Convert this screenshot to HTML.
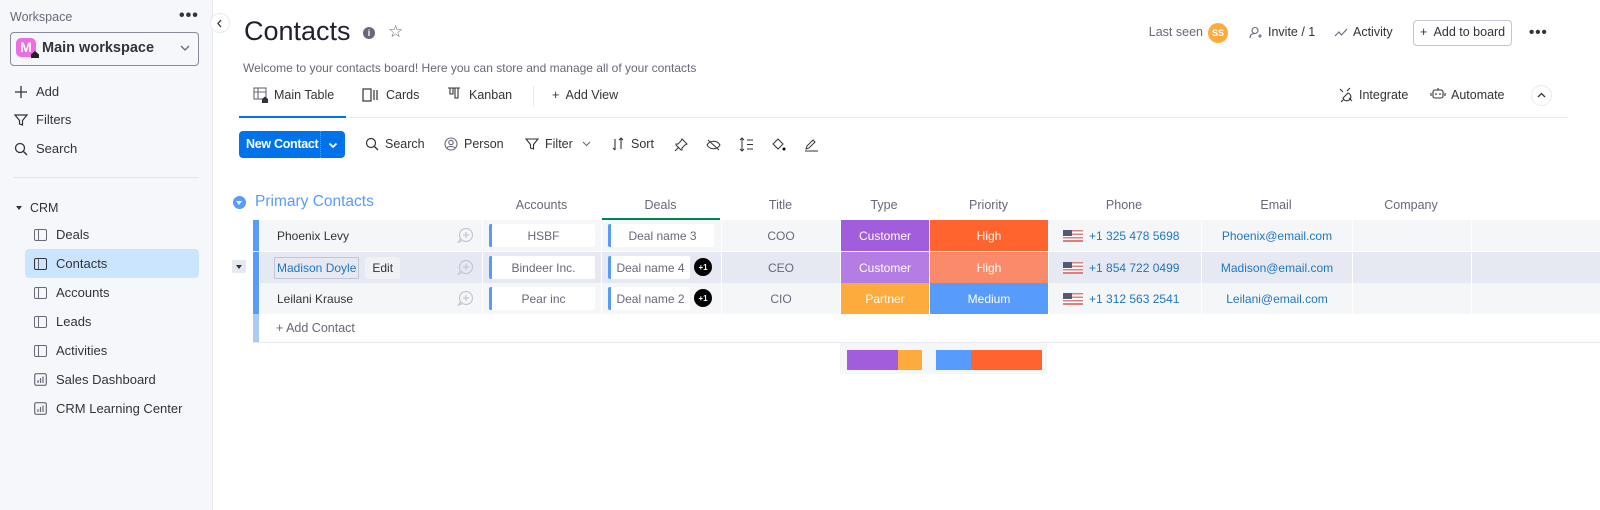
<!DOCTYPE html>
<html><head><meta charset="utf-8"><style>
*{box-sizing:border-box;margin:0;padding:0}
body{width:1600px;height:510px;overflow:hidden;background:#fff;font-family:"Liberation Sans",Arial,sans-serif;color:#323338;position:relative;font-size:13px}
.a{position:absolute}
.sb{left:0;top:0;width:213px;height:510px;background:#f6f7fb;border-right:1px solid #e6e9ef}
.ni{position:absolute;left:14px;font-size:13px;color:#323338;display:flex;align-items:center;gap:8px}
.tree{position:absolute;left:25px;width:174px;height:29px;display:flex;align-items:center;padding-left:9px;gap:9px;font-size:13px;color:#323338;border-radius:4px}
.ic{width:13px;height:12px;border:1.3px solid #676879;border-radius:2px;position:relative}
.ic:after{content:"";position:absolute;left:3px;top:0;bottom:0;border-left:1.3px solid #676879}
.row{position:absolute;left:253px;height:31px;display:flex;gap:1px}
.row>div{height:31px;background:#f5f6f8;display:flex;align-items:center;justify-content:center;font-size:12px;color:#676879;position:relative}
.row.sel>div{background:#e6e9f2}
.row>.bar{width:6px;background:#579bfc!important}
.box{position:absolute;top:4px;height:23px;background:#fff;border-left:3px solid #579bfc;border-radius:2px;display:flex;align-items:center;justify-content:center;font-size:12px;color:#676879}
.p1{position:absolute;width:18px;height:18px;border-radius:50%;background:#000;color:#fff;font-size:8px;font-weight:bold;display:flex;align-items:center;justify-content:center;top:6px}
.hd{position:absolute;top:198px;font-size:12.5px;color:#676879;text-align:center}
.flag{width:20px;height:12px;background:repeating-linear-gradient(#d98080 0 1.7px,#fff 1.7px 3.4px);position:relative;margin-right:6px}
.flag:before{content:"";position:absolute;left:0;top:0;width:9px;height:6px;background:#555a6e}
.row>div.blue{color:#1f76c2}
.tb{position:absolute;top:137px;font-size:12.5px;color:#323338;display:flex;align-items:center;gap:6px}
</style></head><body>
<div class="a sb"></div>
<div class="a" style="left:10px;top:10px;font-size:12.5px;color:#676879">Workspace</div>
<div class="a" style="left:179px;top:7px;font-size:16px;font-weight:bold;letter-spacing:1px">•••</div>
<div class="a" style="left:10px;top:32px;width:189px;height:34px;border:1px solid #888a99;border-radius:4px;background:#f6f7fb"></div>
<div class="a" style="left:16px;top:38px;width:20px;height:19px;background:#ed6ee0;border-radius:5px;color:#fff;font-weight:bold;font-size:14px;text-align:center;line-height:19px">M</div>
<div class="a" style="left:31px;top:51px;width:8px;height:7px;background:#222;clip-path:polygon(50% 0,100% 50%,100% 100%,0 100%,0 50%)"></div>
<div class="a" style="left:42px;top:40px;font-size:14.5px;font-weight:bold">Main workspace</div>
<svg class="a" style="left:180px;top:45px" width="10" height="7"><path d="M1 1l4 4 4-4" stroke="#676879" fill="none" stroke-width="1.3"/></svg>
<div class="a" style="left:210px;top:13px;width:20px;height:20px;border-radius:50%;background:#fff;border:1px solid #e6e9ef"></div>
<svg class="a" style="left:216px;top:19px" width="8" height="9"><path d="M5 1L2 4.5 5 8" stroke="#323338" fill="none" stroke-width="1.3"/></svg>
<div class="ni" style="top:84px"><svg width="14" height="14"><path d="M7 1v12M1 7h12" stroke="#323338" stroke-width="1.3"/></svg>Add</div>
<div class="ni" style="top:112px"><svg width="14" height="14"><path d="M1 2h12L8.5 7.5V12L5.5 11V7.5z" stroke="#323338" fill="none" stroke-width="1.2"/></svg>Filters</div>
<div class="ni" style="top:141px"><svg width="14" height="14"><circle cx="6" cy="6" r="4.5" stroke="#323338" fill="none" stroke-width="1.3"/><path d="M9.5 9.5L13 13" stroke="#323338" stroke-width="1.4"/></svg>Search</div>
<div class="a" style="left:13px;top:177px;width:186px;border-top:1px solid #e1e3ea"></div>
<div class="a" style="left:16px;top:206px;border-left:3.5px solid transparent;border-right:3.5px solid transparent;border-top:4px solid #323338"></div>
<div class="a" style="left:30px;top:201px;font-size:12.5px">CRM</div>
<div class="tree" style="top:220px"><div class="ic"></div>Deals</div>
<div class="tree" style="top:249px;background:#cce5ff"><div class="ic" style="border-color:#323338"></div>Contacts</div>
<div class="tree" style="top:278px"><div class="ic"></div>Accounts</div>
<div class="tree" style="top:307px"><div class="ic"></div>Leads</div>
<div class="tree" style="top:336px"><div class="ic"></div>Activities</div>
<div class="tree" style="top:365px"><svg width="13" height="13"><rect x=".7" y=".7" width="11.6" height="11.6" rx="1.5" stroke="#676879" fill="none" stroke-width="1.2"/><path d="M4 10V7M6.5 10V5M9 10V3.5" stroke="#676879" stroke-width="1.2"/></svg>Sales Dashboard</div>
<div class="tree" style="top:394px"><svg width="13" height="13"><rect x=".7" y=".7" width="11.6" height="11.6" rx="1.5" stroke="#676879" fill="none" stroke-width="1.2"/><path d="M4 10V7M6.5 10V5M9 10V3.5" stroke="#676879" stroke-width="1.2"/></svg>CRM Learning Center</div>

<div class="a" style="left:244px;top:16px;font-size:27px;color:#1f1f2e">Contacts</div>
<div class="a" style="left:363px;top:27px;width:12px;height:12px;border-radius:50%;background:#676879;color:#fff;font-size:9px;font-weight:bold;text-align:center;line-height:12px">i</div>
<div class="a" style="left:388px;top:22px;font-size:17px;color:#676879">☆</div>
<div class="a" style="left:243px;top:61px;font-size:12px;color:#676879">Welcome to your contacts board! Here you can store and manage all of your contacts</div>
<div class="a" style="left:1100px;width:103px;text-align:right;top:25px;font-size:12.5px;color:#676879">Last seen</div>
<div class="a" style="left:1208px;top:23px;width:20px;height:20px;border-radius:50%;background:#fdab3d;color:#fff;font-size:9px;font-weight:bold;text-align:center;line-height:20px">SS</div>
<svg class="a" style="left:1249px;top:26px" width="14" height="14"><circle cx="6" cy="4.5" r="3" stroke="#676879" fill="none" stroke-width="1.1"/><path d="M1 12c0-3 2-4.5 5-4.5M9 10h4M11 8v4" stroke="#676879" fill="none" stroke-width="1.1"/></svg>
<div class="a" style="left:1268px;top:25px;font-size:12.5px">Invite / 1</div>
<svg class="a" style="left:1334px;top:28px" width="14" height="9"><path d="M1 8l4-4 2.5 3L13 1" stroke="#676879" fill="none" stroke-width="1.1"/></svg>
<div class="a" style="left:1353px;top:25px;font-size:12.5px">Activity</div>
<div class="a" style="left:1413px;top:20px;width:99px;height:26px;border:1px solid #c3c6d4;border-radius:4px"></div>
<div class="a" style="left:1420px;top:25px;font-size:12.5px">+&nbsp; Add to board</div>
<div class="a" style="left:1529px;top:24px;font-size:15px;font-weight:bold;letter-spacing:1px">•••</div>

<svg class="a" style="left:253px;top:87px" width="16" height="16"><rect x="1" y="1" width="12" height="11" stroke="#676879" fill="none" stroke-width="1.1"/><path d="M1 5h12M5 1v11" stroke="#676879" stroke-width="1.1"/><path d="M9 16v-4l3-2.5 3 2.5v4z" fill="#323338"/></svg>
<div class="a" style="left:274px;top:88px;font-size:12.5px">Main Table</div>
<div class="a" style="left:239px;top:116px;width:107px;height:2px;background:#0073ea"></div>
<div class="a" style="left:346px;top:117px;width:1222px;height:1px;background:#e6e9ef"></div>
<svg class="a" style="left:362px;top:88px" width="16" height="14"><rect x="1" y="1" width="8" height="12" stroke="#323338" fill="none" stroke-width="1.2"/><path d="M12 2v10M15 2v10" stroke="#323338" stroke-width="1.2"/></svg>
<div class="a" style="left:386px;top:88px;font-size:12.5px">Cards</div>
<svg class="a" style="left:447px;top:87px" width="14" height="13"><path d="M1 1h12M3 1v6h3V1M8 1v10h3V1" stroke="#323338" fill="none" stroke-width="1.1"/></svg>
<div class="a" style="left:469px;top:88px;font-size:12.5px">Kanban</div>
<div class="a" style="left:533px;top:86px;width:1px;height:21px;background:#e6e9ef"></div>
<div class="a" style="left:552px;top:88px;font-size:12.5px">+&nbsp; Add View</div>
<svg class="a" style="left:1338px;top:87px" width="16" height="16"><path d="M2 2l3 3M12 1L9 4M10 6a4 4 0 1 1-5 5zM6 12l-3 3M11 11l3 3" stroke="#323338" fill="none" stroke-width="1.1"/></svg>
<div class="a" style="left:1359px;top:88px;font-size:12.5px">Integrate</div>
<svg class="a" style="left:1430px;top:87px" width="16" height="13"><rect x="3" y="3" width="10" height="8" rx="2" stroke="#323338" fill="none" stroke-width="1.1"/><path d="M8 1v2M1 6v3M15 6v3" stroke="#323338" stroke-width="1.1"/><circle cx="6" cy="7" r=".8"/><circle cx="10" cy="7" r=".8"/></svg>
<div class="a" style="left:1451px;top:88px;font-size:12.5px">Automate</div>
<div class="a" style="left:1531px;top:85px;width:21px;height:21px;border-radius:50%;border:1px solid #e6e9ef"></div>
<svg class="a" style="left:1537px;top:92px" width="9" height="6"><path d="M1 5l3.5-3.5L8 5" stroke="#323338" fill="none" stroke-width="1.3"/></svg>

<div class="a" style="left:239px;top:131px;width:106px;height:27px;background:#0073ea;border-radius:4px"></div>
<div class="a" style="left:320px;top:131px;width:1px;height:27px;border-left:1px dotted #5aa0f0"></div>
<div class="a" style="left:246px;top:137px;font-size:12.5px;color:#fff;font-weight:bold;letter-spacing:-.3px">New Contact</div>
<svg class="a" style="left:328px;top:142px" width="10" height="7"><path d="M1.5 1.5l3.5 3.5 3.5-3.5" stroke="#fff" fill="none" stroke-width="1.8"/></svg>
<div class="tb" style="left:365px"><svg width="14" height="14"><circle cx="6" cy="6" r="4.5" stroke="#323338" fill="none" stroke-width="1.2"/><path d="M9.5 9.5L13 13" stroke="#323338" stroke-width="1.3"/></svg>Search</div>
<div class="tb" style="left:444px"><svg width="14" height="14"><circle cx="7" cy="7" r="6" stroke="#676879" fill="none" stroke-width="1.1"/><circle cx="7" cy="5.5" r="2.2" stroke="#676879" fill="none" stroke-width="1.1"/><path d="M3 11c1-2 7-2 8 0" stroke="#676879" fill="none" stroke-width="1.1"/></svg>Person</div>
<div class="tb" style="left:525px"><svg width="14" height="14"><path d="M1 2h12L8.5 7.5V12L5.5 11V7.5z" stroke="#323338" fill="none" stroke-width="1.1"/></svg>Filter&nbsp;<svg width="9" height="6"><path d="M1 1l3.5 3.5L8 1" stroke="#676879" fill="none" stroke-width="1.1"/></svg></div>
<div class="tb" style="left:611px"><svg width="14" height="14"><path d="M4 2v11M2 11l2 2M10 12V1M8 3l2-2 2 2" stroke="#323338" fill="none" stroke-width="1.1"/></svg>Sort</div>
<svg class="a" style="left:674px;top:138px" width="14" height="14"><path d="M8 1l5 5-2 1-3 3 0 2-1 0-5-5 0-1 2 0 3-3zM5 9l-4 4" stroke="#323338" fill="none" stroke-width="1"/></svg>
<svg class="a" style="left:706px;top:139px" width="15" height="12"><path d="M1 6c3-5 10-5 13 0-3 5-10 5-13 0z" stroke="#323338" fill="none" stroke-width="1"/><path d="M2 1l11 10" stroke="#323338" stroke-width="1"/></svg>
<svg class="a" style="left:739px;top:137px" width="15" height="15"><path d="M3 1v13M1 3l2-2 2 2M1 12l2 2 2-2M8 3h6M8 7.5h6M8 12h6" stroke="#323338" fill="none" stroke-width="1"/></svg>
<svg class="a" style="left:771px;top:137px" width="15" height="15"><path d="M2 7l5-5 5 5-5 5z" stroke="#323338" fill="none" stroke-width="1"/><circle cx="13" cy="12" r="1.5"/></svg>
<svg class="a" style="left:804px;top:138px" width="15" height="14"><path d="M2 11l1-3 6-6 2 2-6 6zM1 13h13" stroke="#323338" fill="none" stroke-width="1"/></svg>

<div class="a" style="left:233px;top:196px;width:13px;height:13px;border-radius:50%;background:#579bfc"></div>
<div class="a" style="left:236px;top:201px;border-left:3.5px solid transparent;border-right:3.5px solid transparent;border-top:4px solid #fff"></div>
<div class="a" style="left:255px;top:193px;font-size:15.5px;color:#579bfc">Primary Contacts</div>
<div class="hd" style="left:482px;width:119px">Accounts</div>
<div class="hd" style="left:601px;width:119px">Deals</div>
<div class="a" style="left:602px;top:218px;width:118px;height:2px;background:#00854d"></div>
<div class="hd" style="left:721px;width:119px">Title</div>
<div class="hd" style="left:840px;width:88px">Type</div>
<div class="hd" style="left:929px;width:119px">Priority</div>
<div class="hd" style="left:1048px;width:152px">Phone</div>
<div class="hd" style="left:1201px;width:150px">Email</div>
<div class="hd" style="left:1352px;width:118px">Company</div>

<div class="row" style="top:220px">
<div class="bar"></div>
<div style="width:222px;justify-content:flex-start;padding-left:17px;color:#323338">Phoenix Levy<svg style="position:absolute;left:197px;top:7px" width="17" height="17"><circle cx="9" cy="8" r="6.5" stroke="#c3c6d4" fill="none" stroke-width="1.2"/><path d="M9 5v6M6 8h6M3.5 12l-2 3 3-1" stroke="#c3c6d4" fill="none" stroke-width="1.2"/></svg></div>
<div style="width:118px"><div class="box" style="left:6px;width:106px">HSBF</div></div>
<div style="width:119px"><div class="box" style="left:6px;width:106px">Deal name 3</div></div>
<div style="width:118px">COO</div>
<div style="width:88px;background:#a25ddc!important;color:#fff">Customer</div>
<div style="width:118px;background:#ff642e!important;color:#fff">High</div>
<div style="width:152px;justify-content:flex-start;padding-left:14px" class="blue"><div class="flag"></div>+1 325 478 5698</div>
<div style="width:150px" class="blue">Phoenix@email.com</div>
<div style="width:118px"></div>
<div style="width:129px"></div>
</div>
<div class="row sel" style="top:252px">
<div class="bar"></div>
<div style="width:222px;justify-content:flex-start;padding-left:14px"><span style="border:1px solid #c3c6d4;padding:3px 2px;color:#1f76c2;background:#e6e9f2">Madison Doyle</span><span style="margin-left:6px;background:#f0f1f5;padding:4px 7px;border-radius:3px;color:#323338">Edit</span><svg style="position:absolute;left:197px;top:7px" width="17" height="17"><circle cx="9" cy="8" r="6.5" stroke="#c3c6d4" fill="none" stroke-width="1.2"/><path d="M9 5v6M6 8h6M3.5 12l-2 3 3-1" stroke="#c3c6d4" fill="none" stroke-width="1.2"/></svg></div>
<div style="width:118px"><div class="box" style="left:6px;width:106px">Bindeer Inc.</div></div>
<div style="width:119px"><div class="box" style="left:6px;width:82px">Deal name 4</div><div class="p1" style="left:92px">+1</div></div>
<div style="width:118px">CEO</div>
<div style="width:88px;background:#b57de3!important;color:#fff">Customer</div>
<div style="width:118px;background:#f98b6b!important;color:#fff">High</div>
<div style="width:152px;justify-content:flex-start;padding-left:14px" class="blue"><div class="flag"></div>+1 854 722 0499</div>
<div style="width:150px" class="blue">Madison@email.com</div>
<div style="width:118px"></div>
<div style="width:129px"></div>
</div>
<div class="row" style="top:283px">
<div class="bar"></div>
<div style="width:222px;justify-content:flex-start;padding-left:17px;color:#323338">Leilani Krause<svg style="position:absolute;left:197px;top:7px" width="17" height="17"><circle cx="9" cy="8" r="6.5" stroke="#c3c6d4" fill="none" stroke-width="1.2"/><path d="M9 5v6M6 8h6M3.5 12l-2 3 3-1" stroke="#c3c6d4" fill="none" stroke-width="1.2"/></svg></div>
<div style="width:118px"><div class="box" style="left:6px;width:106px">Pear inc</div></div>
<div style="width:119px"><div class="box" style="left:6px;width:82px">Deal name 2</div><div class="p1" style="left:92px">+1</div></div>
<div style="width:118px">CIO</div>
<div style="width:88px;background:#fdab3d!important;color:#fff">Partner</div>
<div style="width:118px;background:#579bfc!important;color:#fff">Medium</div>
<div style="width:152px;justify-content:flex-start;padding-left:14px" class="blue"><div class="flag"></div>+1 312 563 2541</div>
<div style="width:150px" class="blue">Leilani@email.com</div>
<div style="width:118px"></div>
<div style="width:129px"></div>
</div>
<div class="a" style="left:232px;top:260px;width:14px;height:13px;background:#e6e9ef;border-radius:2px"></div>
<div class="a" style="left:236px;top:265px;border-left:3.5px solid transparent;border-right:3.5px solid transparent;border-top:4px solid #323338"></div>
<div class="a" style="left:253px;top:314px;width:6px;height:29px;background:#aacbf5"></div>
<div class="a" style="left:276px;top:321px;font-size:12.5px;color:#676879">+ Add Contact</div>
<div class="a" style="left:253px;top:342px;width:1347px;height:1px;background:#e6e9ef"></div>
<div class="a" style="left:840px;top:343px;width:207px;height:31px;background:#f5f6f8"></div>
<div class="a" style="left:847px;top:350px;width:51px;height:20px;background:#a25ddc"></div>
<div class="a" style="left:898px;top:350px;width:24px;height:20px;background:#fdab3d"></div>
<div class="a" style="left:936px;top:350px;width:35px;height:20px;background:#579bfc"></div>
<div class="a" style="left:971px;top:350px;width:71px;height:20px;background:#ff642e"></div>
</body></html>
